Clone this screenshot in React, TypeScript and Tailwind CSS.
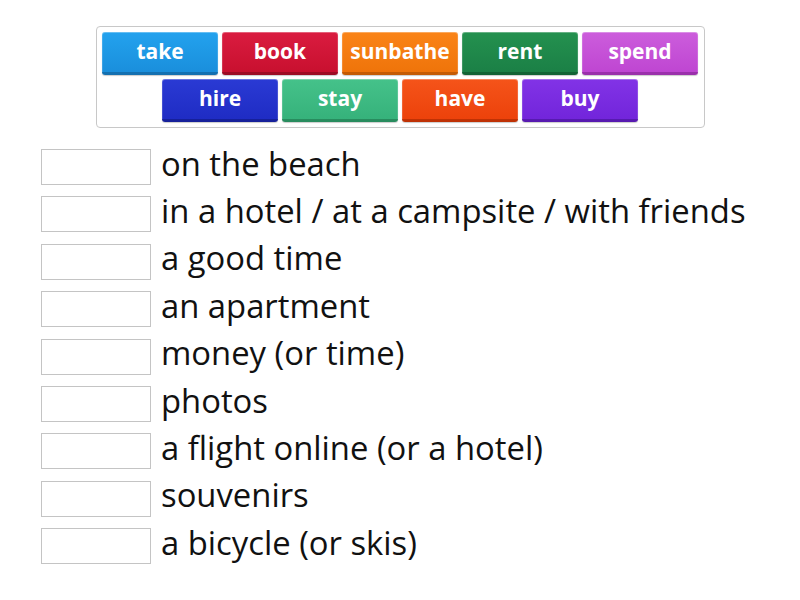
import React from "react";

const words: { t: string; c: string }[] = [
  { t: "take", c: "bg-[linear-gradient(#23a2ee,#1a8fdc)] border-b-[#1470b0]" },
  { t: "book", c: "bg-[linear-gradient(#da1c40,#c8102f)] border-b-[#9c0c24]" },
  { t: "sunbathe", c: "bg-[linear-gradient(#fa8418,#ef740a)] border-b-[#c45b04]" },
  { t: "rent", c: "bg-[linear-gradient(#24914f,#1b8046)] border-b-[#136335]" },
  { t: "spend", c: "bg-[linear-gradient(#cc5ddc,#bf46d2)] border-b-[#9a30ab]" },
];
const words2: { t: string; c: string }[] = [
  { t: "hire", c: "bg-[linear-gradient(#2a3ad4,#1f2cc4)] border-b-[#16209a]" },
  { t: "stay", c: "bg-[linear-gradient(#45c28a,#36b27b)] border-b-[#288c5e]" },
  { t: "have", c: "bg-[linear-gradient(#f5541a,#ec420b)] border-b-[#bf3205]" },
  { t: "buy", c: "bg-[linear-gradient(#8233e6,#7225db)] border-b-[#571ab0]" },
];

const items = [
  "on the beach",
  "in a hotel / at a campsite / with friends",
  "a good time",
  "an apartment",
  "money (or time)",
  "photos",
  "a flight online (or a hotel)",
  "souvenirs",
  "a bicycle (or skis)",
];

function Tile({ t, c }: { t: string; c: string }) {
  return (
    <div
      className={`w-[116px] h-[43px] rounded-[3px] flex items-center justify-center text-white font-bold text-[21px] border-b-[3px] shadow-[inset_0_1px_0_rgba(255,255,255,0.3),inset_1px_0_0_rgba(255,255,255,0.15),inset_-1px_0_0_rgba(255,255,255,0.15),0_1px_1px_rgba(0,0,0,0.2)] ${c}`}
    >
      <span>{t}</span>
    </div>
  );
}

export default function App() {
  return (
    <div
      className="w-[800px] h-[600px] bg-white relative"
      style={{ fontFamily: '"Open Sans", "Noto Sans", sans-serif' }}
    >
      <div className="pt-[26px] flex justify-center">
        <div className="w-[609px] border border-[#c8c8c8] rounded-[4px] px-[5px] pt-[5px] pb-[5px] flex flex-col items-center gap-[4px]">
          <div className="flex gap-[4px]">
            {words.map((w) => (
              <Tile key={w.t} {...w} />
            ))}
          </div>
          <div className="flex gap-[4px]">
            {words2.map((w) => (
              <Tile key={w.t} {...w} />
            ))}
          </div>
        </div>
      </div>
      <div className="pl-[41px] pt-[21px] flex flex-col gap-[11.4px]">
        {items.map((it) => (
          <div key={it} className="flex items-center h-[36px]">
            <div className="w-[110px] h-[36px] border border-[#c4c4c4] shrink-0" />
            <span className="ml-[10px] text-[32.8px] text-[#111] leading-none -mt-[6px] whitespace-nowrap">
              {it}
            </span>
          </div>
        ))}
      </div>
    </div>
  );
}
